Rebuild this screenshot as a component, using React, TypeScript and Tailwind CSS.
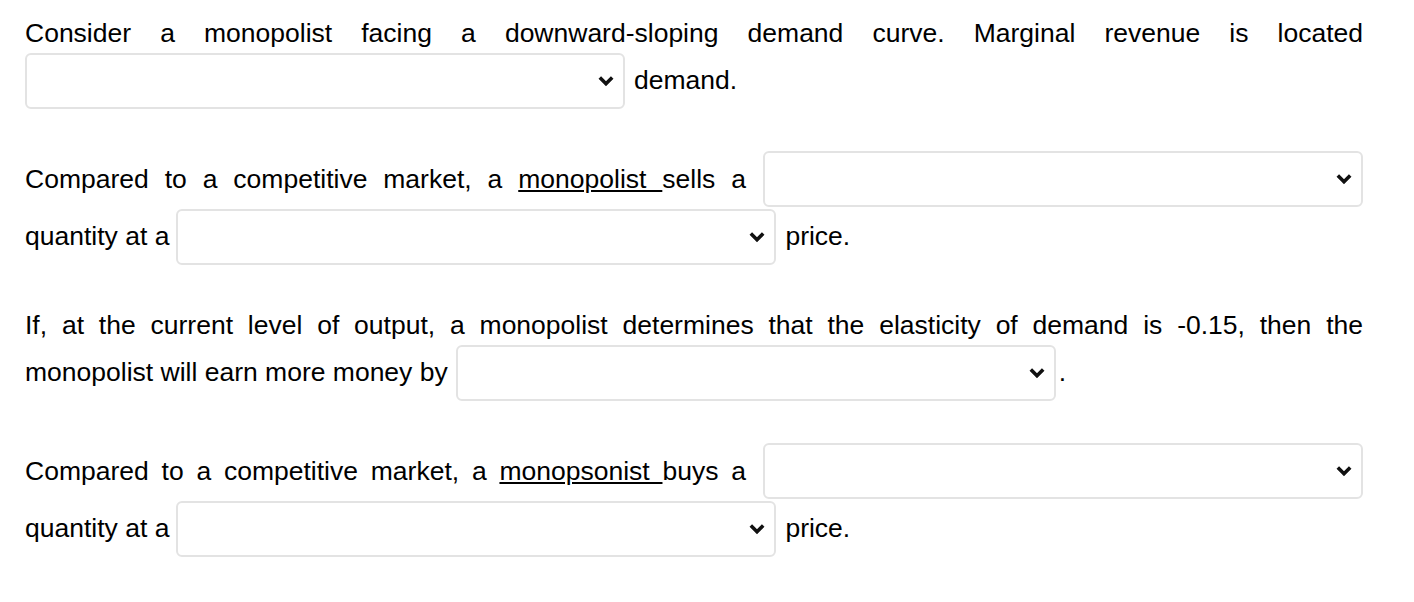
import { useState } from 'react'

// Inline dropdown used inside the question text
function Dropdown({ width = 'w-[600px]' }: { width?: string }) {
  const [value, setValue] = useState('')
  return (
    <div className={`relative h-[56px] shrink-0 ${width}`}>
      <select
        value={value}
        onChange={e => setValue(e.target.value)}
        className="h-full w-full appearance-none rounded-[6px] border-2 border-[#e3e3e3] bg-white px-3 outline-none"
      >
        <option value=""></option>
        <option value="a">above</option>
        <option value="b">below</option>
      </select>
      <svg
        className="pointer-events-none absolute right-[11px] top-1/2 -translate-y-1/2"
        width="16"
        height="11"
        viewBox="0 0 16 11"
      >
        <path d="M1.8 2 L8 8.2 L14.2 2" fill="none" stroke="#111" strokeWidth="3.6" />
      </svg>
    </div>
  )
}

// A text line stretched to the full width (justified, last line included)
function JustLine({ children }: { children: React.ReactNode }) {
  return (
    <div className="flex-1 text-justify leading-[38px] [text-align-last:justify]">{children}</div>
  )
}

function Row({ children }: { children: React.ReactNode }) {
  return <div className="flex h-[58px] items-center">{children}</div>
}

export default function App() {
  return (
    <div
      className="min-h-[602px] bg-white pl-[25px] pr-[51px] pt-[14px] text-[26.5px] text-black"
      style={{ fontFamily: '"Liberation Sans", Arial, sans-serif' }}
    >
      {/* Q1 */}
      <div>
        <div className="flex">
          <JustLine>
            Consider a monopolist facing a downward-sloping demand curve. Marginal revenue is located
          </JustLine>
        </div>
        <Row>
          <Dropdown />
          <span className="ml-[9px]">demand.</span>
        </Row>
      </div>

      {/* Q2 */}
      <div className="mt-[40px]">
        <Row>
          <JustLine>
            Compared to a competitive market, a <span className="underline">monopolist </span>sells a
          </JustLine>
          <div className="ml-[17px]">
            <Dropdown />
          </div>
        </Row>
        <Row>
          <span className="mr-[7px]">quantity at a</span>
          <Dropdown />
          <span className="ml-[9px]">price.</span>
        </Row>
      </div>

      {/* Q3 */}
      <div className="mt-[40px]">
        <div className="flex">
          <JustLine>
            If, at the current level of output, a monopolist determines that the elasticity of demand is -0.15, then the
          </JustLine>
        </div>
        <Row>
          <span className="mr-[8px]">monopolist will earn more money by</span>
          <Dropdown />
          <span className="ml-[3px]">.</span>
        </Row>
      </div>

      {/* Q4 */}
      <div className="mt-[40px]">
        <Row>
          <JustLine>
            Compared to a competitive market, a <span className="underline">monopsonist </span>buys a
          </JustLine>
          <div className="ml-[17px]">
            <Dropdown />
          </div>
        </Row>
        <Row>
          <span className="mr-[7px]">quantity at a</span>
          <Dropdown />
          <span className="ml-[9px]">price.</span>
        </Row>
      </div>
    </div>
  )
}
